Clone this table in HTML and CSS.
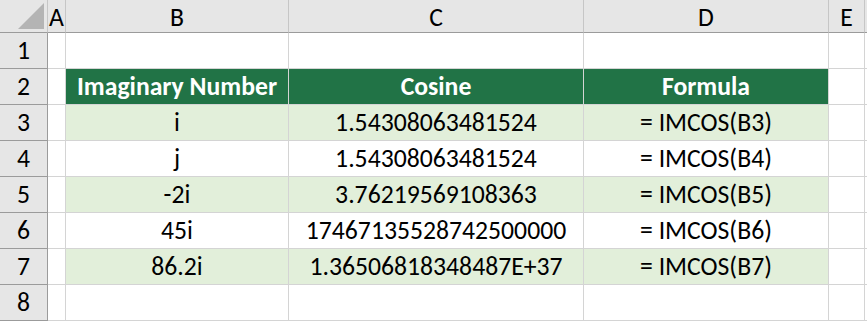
FILE: index.html
```html
<!DOCTYPE html>
<html>
<head>
<meta charset="utf-8">
<link rel="stylesheet" href="styles.css">
</head>
<body>
<div class="sheet">
  <div class="corner"><span class="tri"></span></div>
  <div class="colhead">A</div>
  <div class="colhead">B</div>
  <div class="colhead">C</div>
  <div class="colhead">D</div>
  <div class="colhead">E</div>
  <div class="colhead last"></div>

  <div class="rowhead">1</div>
  <div class="cell"></div><div class="cell"></div><div class="cell"></div><div class="cell"></div><div class="cell"></div><div class="cell last"></div>

  <div class="rowhead">2</div>
  <div class="cell"></div>
  <div class="cell head">Imaginary Number</div>
  <div class="cell head">Cosine</div>
  <div class="cell head">Formula</div>
  <div class="cell"></div><div class="cell last"></div>

  <div class="rowhead">3</div>
  <div class="cell"></div>
  <div class="cell band">i</div>
  <div class="cell band">1.54308063481524</div>
  <div class="cell band">= IMCOS(B3)</div>
  <div class="cell"></div><div class="cell last"></div>

  <div class="rowhead">4</div>
  <div class="cell"></div>
  <div class="cell">j</div>
  <div class="cell">1.54308063481524</div>
  <div class="cell">= IMCOS(B4)</div>
  <div class="cell"></div><div class="cell last"></div>

  <div class="rowhead">5</div>
  <div class="cell"></div>
  <div class="cell band">-2i</div>
  <div class="cell band">3.76219569108363</div>
  <div class="cell band">= IMCOS(B5)</div>
  <div class="cell"></div><div class="cell last"></div>

  <div class="rowhead">6</div>
  <div class="cell"></div>
  <div class="cell">45i</div>
  <div class="cell">17467135528742500000</div>
  <div class="cell">= IMCOS(B6)</div>
  <div class="cell"></div><div class="cell last"></div>

  <div class="rowhead">7</div>
  <div class="cell"></div>
  <div class="cell band">86.2i</div>
  <div class="cell band">1.36506818348487E+37</div>
  <div class="cell band">= IMCOS(B7)</div>
  <div class="cell"></div><div class="cell last"></div>

  <div class="rowhead">8</div>
  <div class="cell"></div><div class="cell"></div><div class="cell"></div><div class="cell"></div><div class="cell"></div><div class="cell last"></div>
</div>
</body>
</html>
```
FILE: styles.css
```css
html, body {
  margin: 0;
  padding: 0;
  background: #ffffff;
  overflow: hidden;
}
.sheet {
  display: grid;
  grid-template-columns: 48px 18px 223px 295px 245px 36px 1fr;
  grid-template-rows: 33px repeat(8, 36px);
  width: 867px;
  font-family: "Carlito", "Calibri", "Lato", sans-serif;
  font-size: 25.7px;
  color: #000;
}
.sheet > div {
  box-sizing: border-box;
  display: flex;
  align-items: center;
  justify-content: center;
  white-space: nowrap;
  overflow: hidden;
}
.corner {
  background: #e6e6e6;
  border-right: 1px solid #c6c6c6;
  border-bottom: 1px solid #9b9b9b;
  position: relative;
}
.tri {
  position: absolute;
  left: 18px;
  top: 3px;
  width: 26px;
  height: 26px;
  background: #b4b4b4;
  clip-path: polygon(100% 0, 100% 100%, 0 100%);
}
.colhead {
  background: #e6e6e6;
  border-right: 1px solid #c6c6c6;
  border-bottom: 1px solid #9b9b9b;
  padding-top: 2px;
}
.rowhead {
  background: #e6e6e6;
  border-right: 1px solid #9b9b9b;
  border-bottom: 1px solid #9b9b9b;
}
.cell {
  border-right: 1px solid #d4d4d4;
  border-bottom: 1px solid #d4d4d4;
}
.sheet > .last {
  border-right: none;
}
.head {
  background: #217346;
  color: #ffffff;
  font-weight: bold;
}
.band {
  background: #e2efda;
}
```
